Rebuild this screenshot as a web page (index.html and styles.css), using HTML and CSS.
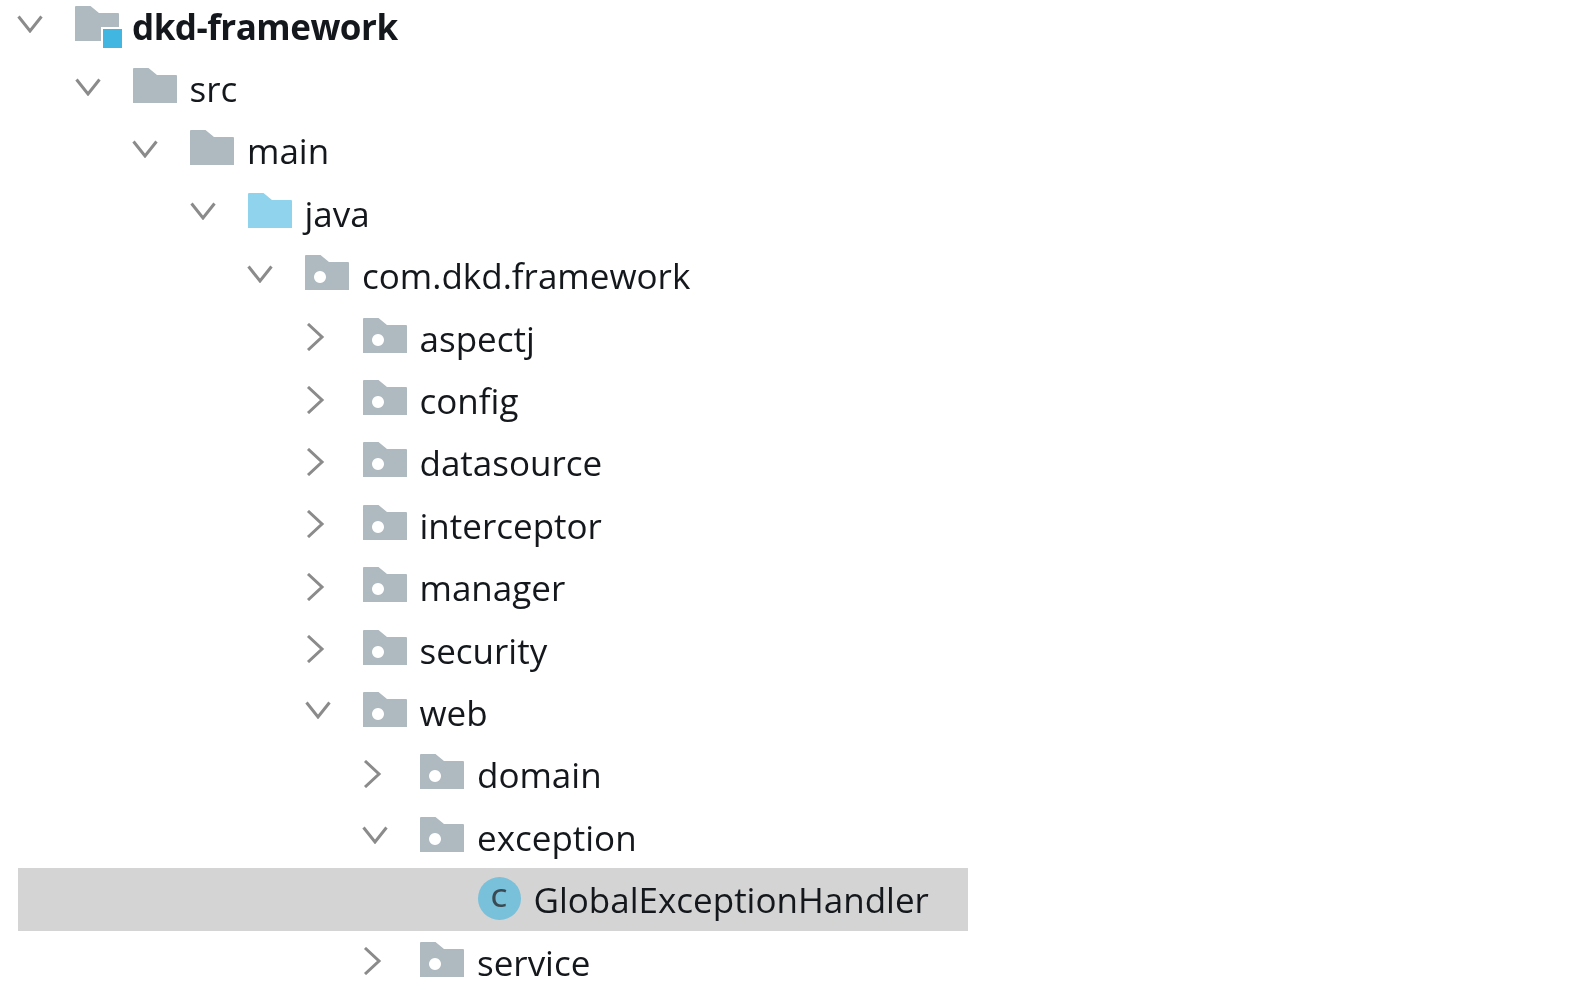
FILE: index.html
```html
<!DOCTYPE html>
<html lang="en">
<head>
<meta charset="utf-8">
<title>Project tree</title>
<link rel="stylesheet" href="styles.css">
</head>
<body>
<svg class="defs" width="0" height="0" aria-hidden="true">
  <symbol id="down" viewBox="0 0 26 18"><path d="M1.500 1.500 13 16 24.500 1.500" fill="none" stroke="#8b8b8b" stroke-width="3"/></symbol>
  <symbol id="right" viewBox="0 0 26 28"><path d="M2 1 16 14 2 27" fill="none" stroke="#8b8b8b" stroke-width="3"/></symbol>
  <symbol id="folder" viewBox="0 0 44 35"><path d="M0 1Q0 0 1 0H15.500L24 7H43Q44 7 44 8V35H0Z"/></symbol>
  <symbol id="package" viewBox="0 0 44 35"><path fill-rule="evenodd" d="M0 1Q0 0 1 0H15.500L24 7H43Q44 7 44 8V35H0ZM15 16a6 6 0 1 0 .01 0Z"/></symbol>
</svg>
<ul class="tree">
  <li class="row d0"><svg class="twisty-down"><use href="#down"/></svg><span class="module"><svg class="folder grey"><use href="#folder"/></svg><i class="module-badge"></i></span><span class="label bold">dkd-framework</span></li>
  <li class="row d1"><svg class="twisty-down"><use href="#down"/></svg><svg class="folder grey"><use href="#folder"/></svg><span class="label">src</span></li>
  <li class="row d2"><svg class="twisty-down"><use href="#down"/></svg><svg class="folder grey"><use href="#folder"/></svg><span class="label">main</span></li>
  <li class="row d3"><svg class="twisty-down"><use href="#down"/></svg><svg class="folder blue"><use href="#folder"/></svg><span class="label">java</span></li>
  <li class="row d4"><svg class="twisty-down"><use href="#down"/></svg><svg class="folder grey"><use href="#package"/></svg><span class="label">com.dkd.framework</span></li>
  <li class="row d5"><svg class="twisty-right"><use href="#right"/></svg><svg class="folder grey"><use href="#package"/></svg><span class="label">aspectj</span></li>
  <li class="row d5"><svg class="twisty-right"><use href="#right"/></svg><svg class="folder grey"><use href="#package"/></svg><span class="label">config</span></li>
  <li class="row d5"><svg class="twisty-right"><use href="#right"/></svg><svg class="folder grey"><use href="#package"/></svg><span class="label">datasource</span></li>
  <li class="row d5"><svg class="twisty-right"><use href="#right"/></svg><svg class="folder grey"><use href="#package"/></svg><span class="label">interceptor</span></li>
  <li class="row d5"><svg class="twisty-right"><use href="#right"/></svg><svg class="folder grey"><use href="#package"/></svg><span class="label">manager</span></li>
  <li class="row d5"><svg class="twisty-right"><use href="#right"/></svg><svg class="folder grey"><use href="#package"/></svg><span class="label">security</span></li>
  <li class="row d5"><svg class="twisty-down"><use href="#down"/></svg><svg class="folder grey"><use href="#package"/></svg><span class="label">web</span></li>
  <li class="row d6"><svg class="twisty-right"><use href="#right"/></svg><svg class="folder grey"><use href="#package"/></svg><span class="label">domain</span></li>
  <li class="row d6"><svg class="twisty-down"><use href="#down"/></svg><svg class="folder grey"><use href="#package"/></svg><span class="label">exception</span></li>
  <li class="row d7 selected"><span class="class-icon">C</span><span class="label">GlobalExceptionHandler</span></li>
  <li class="row d6"><svg class="twisty-right"><use href="#right"/></svg><svg class="folder grey"><use href="#package"/></svg><span class="label">service</span></li>
</ul>
</body>
</html>
```
FILE: styles.css
```css
html, body {
  margin: 0;
  height: 100%;
  overflow: hidden;
  background: #fff;
}
.defs { display: block; }
.tree {
  list-style: none;
  margin: -5px 0 0 18px;
  padding: 0;
  width: 950px;
  font-family: "Open Sans", "Noto Sans", sans-serif;
  font-size: 35px;
  color: #14181c;
  filter: blur(0.5px);
}
.row {
  display: flex;
  align-items: center;
  height: 62.4px;
}
.d0 { padding-left: 0; }
.d1 { padding-left: 57.5px; }
.d2 { padding-left: 115px; }
.d3 { padding-left: 172.500px; }
.d4 { padding-left: 230px; }
.d5 { padding-left: 287.500px; }
.d6 { padding-left: 345px; }
.d7 { padding-left: 402.500px; }
.selected { background: #d4d4d4; }
.twisty-down {
  width: 26px;
  height: 18px;
  margin: -4px 32px 0 -1px;
  flex: none;
}
.twisty-right {
  width: 26px;
  height: 28px;
  margin: -2px 31px 0 0;
  flex: none;
}
.folder {
  width: 44px;
  height: 35px;
  margin: -6px 13px 0 0;
  flex: none;
}
.grey { fill: #aeb9c0; }
.blue { fill: #8fd4ec; }
.module {
  position: relative;
  display: flex;
  flex: none;
}
.module-badge {
  position: absolute;
  left: 28px;
  top: 17px;
  width: 19px;
  height: 19px;
  background: #40b6e0;
  box-shadow: 0 0 0 2px #fff;
}
.class-icon {
  flex: none;
  width: 43px;
  height: 43px;
  margin: -3px 13px 0 57px;
  border-radius: 50%;
  background: #79c0da;
  color: #3a4a52;
  font-size: 26px;
  font-weight: 600;
  line-height: 40px;
  text-align: center;
}
.label {
  line-height: 1;
  white-space: nowrap;
}
.bold {
  font-weight: 700;
  letter-spacing: -0.5px;
}
```
